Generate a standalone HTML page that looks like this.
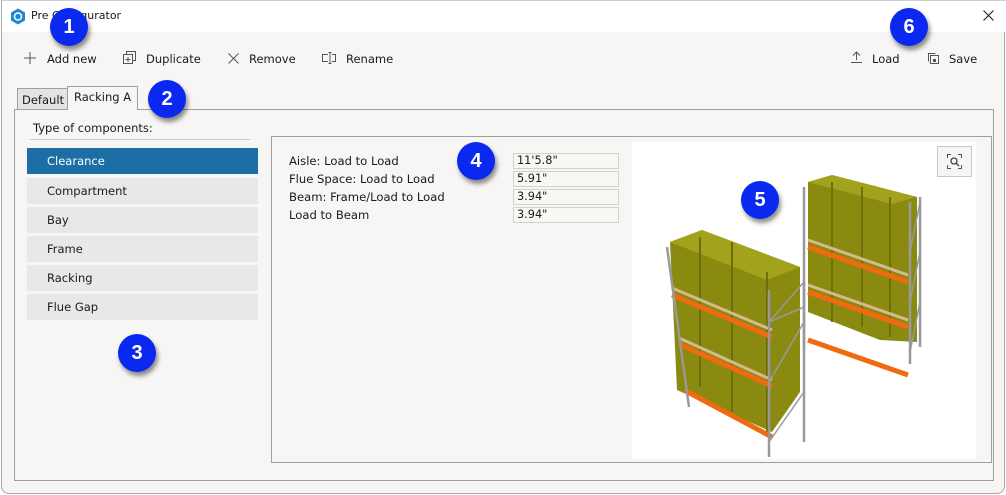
<!DOCTYPE html>
<html><head><meta charset="utf-8"><style>
*{margin:0;padding:0;box-sizing:border-box}
body{width:1006px;height:495px;background:#fff;font-family:"DejaVu Sans","Liberation Sans",sans-serif;font-size:11px;color:#1a1a1a;position:relative;overflow:hidden}
.win{position:absolute;left:1px;top:0;width:1004px;height:494px;border:1px solid #a8a8a8;border-top:none;border-radius:0 0 8px 8px;background:#f7f6f4}
.title{position:absolute;left:0;top:0;width:1004px;height:32px;background:#fff;border-top:1px solid #cfcfcf}
.abs{position:absolute;white-space:nowrap}
.tb{font-size:11.5px;top:52px}
.circ{position:absolute;width:38px;height:38px;border-radius:50%;background:#0a28ef;color:#fff;font:bold 20px "Liberation Sans",sans-serif;text-align:center;line-height:38px;box-shadow:2px 4px 5px rgba(0,0,0,.45)}
.item{position:absolute;left:27px;width:231px;height:26px;background:#e8e8e8;line-height:26px;padding-left:20px;font-size:11.5px}
.lab{position:absolute;left:289px;font-size:11.6px}
.inp{position:absolute;left:513px;width:106px;height:16px;border:1px solid #c9d6c9;background:#f7f7f5;padding-left:3px;line-height:14px;font-size:11.3px}
</style></head><body>
<div class="win">
<div class="title"></div>
</div>
<svg class="abs" style="left:10px;top:8px" width="16" height="17" viewBox="0 0 16 17"><polygon points="8,0.5 15,4.5 15,12.5 8,16.5 1,12.5 1,4.5" fill="#1b8ad0"/><circle cx="8" cy="8.5" r="3.5" fill="none" stroke="#fff" stroke-width="1.5"/></svg>
<div class="abs" style="left:31px;top:9px;font-size:11px">Pre Configurator</div>
<svg class="abs" style="left:983px;top:10px" width="11" height="11"><path d="M0.5 0.5l10 10M10.5 0.5l-10 10" stroke="#222" stroke-width="1.1"/></svg>

<svg class="abs" style="left:24px;top:52px" width="12" height="12"><path d="M6 0v12M0 6h12" stroke="#555"/></svg>
<div class="abs tb" style="left:47px">Add new</div>
<svg class="abs" style="left:123px;top:51px" width="13" height="13"><rect x="3.5" y="0.5" width="9" height="9" fill="none" stroke="#555"/><rect x="0.5" y="3.5" width="9" height="9" fill="#f7f6f4" stroke="#555"/><path d="M5 6v5M2.5 8.5h5" stroke="#555"/></svg>
<div class="abs tb" style="left:146px">Duplicate</div>
<svg class="abs" style="left:228px;top:53px" width="11" height="11"><path d="M0.5 0.5l10 10M10.5 0.5l-10 10" stroke="#555"/></svg>
<div class="abs tb" style="left:249px">Remove</div>
<svg class="abs" style="left:322px;top:52px" width="16" height="12"><path d="M6 2.5H0.5v7H6M10 2.5h3.5v7H10M8 0.5v11M6.5 0.5h3M6.5 11.5h3" fill="none" stroke="#555"/></svg>
<div class="abs tb" style="left:346px">Rename</div>
<svg class="abs" style="left:851px;top:51px" width="11" height="12"><path d="M5.5 9V1M2 4.5l3.5-3.5 3.5 3.5M0 11.5h11" fill="none" stroke="#555"/></svg>
<div class="abs tb" style="left:872px">Load</div>
<svg class="abs" style="left:926px;top:51px" width="13" height="13"><path d="M2.5 10.5V2.5h7" fill="none" stroke="#555"/><rect x="4.5" y="4.5" width="8" height="8" fill="none" stroke="#555"/><rect x="7" y="8" width="3" height="3" fill="#555"/></svg>
<div class="abs tb" style="left:949px">Save</div>

<div class="abs" style="left:17px;top:88px;width:51px;height:22px;background:#e3e3e3;border:1px solid #a0a0a0;border-bottom:none;padding:4px 0 0 4px;font-size:11.5px">Default</div>
<div class="abs" style="left:67px;top:86px;width:71px;height:24px;background:#f7f6f4;border:1px solid #a0a0a0;border-bottom:none;padding:3px 0 0 6px;font-size:11.5px;z-index:2">Racking A</div>
<div class="abs" style="left:14px;top:109px;width:980px;height:372px;border:1px solid #a0a0a0;background:#f7f6f4"></div>

<div class="abs" style="left:33px;top:121px;font-size:11.5px">Type of components:</div>
<div class="abs" style="left:30px;top:139px;width:220px;height:1px;background:#c8c8c8"></div>
<div class="item" style="top:148px;background:#1b6fa5;color:#fff">Clearance</div>
<div class="item" style="top:178px">Compartment</div>
<div class="item" style="top:207px">Bay</div>
<div class="item" style="top:236px">Frame</div>
<div class="item" style="top:265px">Racking</div>
<div class="item" style="top:294px">Flue Gap</div>

<div class="abs" style="left:271px;top:136px;width:721px;height:327px;border:1px solid #a0a0a0;background:#f7f6f4"></div>
<div class="lab" style="top:154px">Aisle: Load to Load</div>
<div class="lab" style="top:172px">Flue Space: Load to Load</div>
<div class="lab" style="top:190px">Beam: Frame/Load to Load</div>
<div class="lab" style="top:208px">Load to Beam</div>
<div class="inp" style="top:153px">11'5.8"</div>
<div class="inp" style="top:171px">5.91"</div>
<div class="inp" style="top:189px">3.94"</div>
<div class="inp" style="top:207px">3.94"</div>

<div class="abs" style="left:632px;top:142px;width:344px;height:317px;background:#fff"></div>
<div class="abs" style="left:937px;top:146px;width:35px;height:31px;border:1px solid #c8c8c8;background:#f5f5f5"></div>
<svg class="abs" style="left:947px;top:154px" width="15" height="15"><path d="M0.5 4V0.5H4M11 0.5h3.5V4M14.5 11v3.5H11M4 14.5H0.5V11" fill="none" stroke="#555"/><circle cx="7" cy="7" r="3" fill="none" stroke="#444" stroke-width="1.3"/><path d="M9 9l3 3" stroke="#444" stroke-width="1.3"/></svg>

<svg class="abs" style="left:632px;top:142px" width="344" height="317" viewBox="0 0 344 317">
<polygon points="176,40 200,33 285,55 285,200 248,198 176,170" fill="#8a8a10"/>
<polygon points="176,40 200,33 285,55 260,62" fill="#a3a21c"/>
<path d="M200,40l0,140M230,45l0,140M258,55l0,140" stroke="#6f6f0a" stroke-width="2"/>
<path d="M176,105l100,35M176,150l100,35M176,198l100,35" stroke="#f06a10" stroke-width="5"/>
<path d="M176,98l100,35M176,143l100,35" stroke="#d8b890" stroke-width="3"/>
<path d="M172,45v162M278,60v162M288,55v150" stroke="#999" stroke-width="2.5"/>
<path d="M278,110l10,-50M278,160l10,-50M278,210l10,-50" stroke="#999" stroke-width="1.5"/>
<polygon points="38,100 70,88 168,125 168,250 140,290 45,248" fill="#8a8a10"/>
<polygon points="38,100 70,88 168,125 135,138" fill="#a3a21c"/>
<path d="M68,95l0,150M100,100l0,170M135,130l0,160" stroke="#6f6f0a" stroke-width="2"/>
<path d="M40,153l100,42M47,202l93,42M52,248l88,47" stroke="#f06a10" stroke-width="5"/>
<path d="M40,146l100,42M47,196l93,42" stroke="#d8b890" stroke-width="3"/>
<path d="M35,105l22,160M137,148v167M172,140v160" stroke="#999" stroke-width="2.5"/>
<path d="M137,180l35,-40M137,240l35,-60M137,300l35,-50M137,180l35,-15" stroke="#999" stroke-width="1.5"/>
</svg>

<div class="circ" style="left:50px;top:8px">1</div>
<div class="circ" style="left:148px;top:80px">2</div>
<div class="circ" style="left:118px;top:334px">3</div>
<div class="circ" style="left:457px;top:142px">4</div>
<div class="circ" style="left:741px;top:181px">5</div>
<div class="circ" style="left:890px;top:8px">6</div>
</body></html>
